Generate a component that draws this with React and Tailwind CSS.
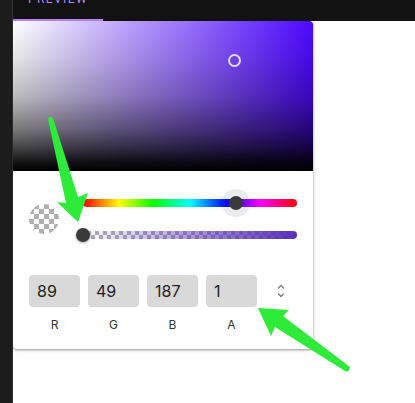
export default function App() {
  const inputs = [
    ["89", "R"],
    ["49", "G"],
    ["187", "B"],
    ["1", "A"],
  ];
  return (
    <div className="relative flex h-[403px] w-[415px] overflow-hidden bg-white font-['Inter',sans-serif]">
      <div className="h-full w-[13px] shrink-0 border-r border-[#333333] bg-[#1c1c1c]" />
      <div className="flex min-w-0 flex-1 flex-col">
        <div className="flex h-[21px] shrink-0 items-end bg-[#121212]">
          <div className="flex h-[21px] w-[90px] items-end justify-center overflow-hidden border-b-2 border-[#c084fc]">
            <span className="mb-[12px] font-['Roboto',sans-serif] text-[12px] leading-[16px] tracking-[1.4px] text-[#b884f0]">PREVIEW</span>
          </div>
        </div>
        <div className="flex h-[328px] w-[300px] flex-col overflow-hidden rounded-b-[4px] bg-white shadow-[0_1px_3px_rgba(0,0,0,0.45)]">
          <div className="relative h-[150px] shrink-0 rounded-tr-[4px] bg-[#4d08ff] bg-[linear-gradient(to_bottom,rgba(0,0,0,0)_0%,rgba(0,0,0,0.1)_25%,rgba(0,0,0,0.26)_50%,rgba(0,0,0,0.52)_72%,rgba(0,0,0,0.74)_85%,rgba(0,0,0,0.92)_94%,#000_100%),linear-gradient(to_right,#fff,rgba(255,255,255,0))]">
            <div className="absolute left-[215px] top-[33px] size-[13px] rounded-full border-2 border-[#e0d8f4]" />
          </div>
          <div className="flex items-center gap-[24px] pl-[16px] pr-[16px] pt-[28px]">
            <div className="size-[30px] shrink-0 rounded-full bg-[repeating-conic-gradient(#b0b0b0_0_25%,#ffffff_0_50%)] bg-[length:10px_10px]" />
            <div className="flex flex-1 flex-col gap-[24px]">
              <div className="relative h-[8px] rounded-full bg-[linear-gradient(to_right,#f00_0%,#ff0_17%,#0f0_33%,#0ff_50%,#00f_67%,#f0f_83%,#f00_100%)]">
                <div className="absolute left-[139px] top-[-10px] size-[28px] rounded-full bg-[#3a3a3a]/10" />
                <div className="absolute left-[146px] top-[-3px] size-[14px] rounded-full bg-[#3a3a3a]" />
              </div>
              <div className="relative h-[8px] rounded-full bg-[repeating-conic-gradient(#b0b0b0_0_25%,#ffffff_0_50%)] bg-[length:8px_8px]">
                <div className="h-full rounded-full bg-[linear-gradient(to_right,rgba(89,49,187,0),rgb(89,49,187))]" />
                <div className="absolute left-[-7px] top-[-3px] size-[14px] rounded-full bg-[#3a3a3a] shadow-[0_1px_3px_rgba(0,0,0,0.3)]" />
              </div>
            </div>
          </div>
          <div className="flex items-start pl-[16px] pt-[36px]">
            <div className="flex gap-[8px]">
              {inputs.map(([value, label]) => (
                <div key={label} className="flex w-[51px] flex-col items-center">
                  <div className="flex h-[32px] w-full items-center rounded-[4px] bg-[#d9d9d9] pl-[8px] text-[16px] leading-[24px] text-[#222222]">{value}</div>
                  <div className="mt-[10px] text-[12px] leading-[16px] text-[#333333]">{label}</div>
                </div>
              ))}
            </div>
            <div className="ml-[16px] flex h-[32px] w-[16px] items-center justify-center">
              <svg width="10" height="14" viewBox="0 0 10 14" fill="none" stroke="#777777" strokeWidth="1.2" strokeLinecap="round" strokeLinejoin="round">
                <path d="M2.5 4 L5 1.5 L7.5 4" />
                <path d="M2.5 10 L5 12.5 L7.5 10" />
              </svg>
            </div>
          </div>
        </div>
      </div>
      <svg className="pointer-events-none absolute left-0 top-0" width="415" height="403" viewBox="0 0 415 403" fill="#2eeb3a">
        <path d="M48 119 Q50 115 53 118 L78 197 L88 193 L78 222 L57 202 L66 203 Z" />
        <path d="M258 308 L289 310 L283 316 L350 367 Q349 373 345 371 L275 327 L271 336 Z" />
      </svg>
    </div>
  );
}
